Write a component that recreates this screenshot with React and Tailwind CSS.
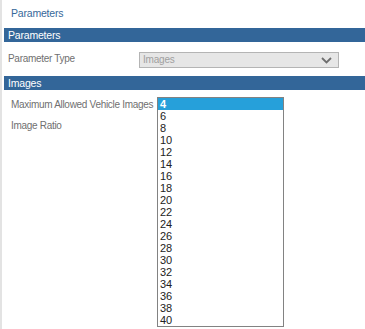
import React from "react";

const options = [4, 6, 8, 10, 12, 14, 16, 18, 20, 22, 24, 26, 28, 30, 32, 34, 36, 38, 40];

const SectionBar = ({ title }) => (
  <div className="h-[14px] bg-[#336699] pl-[4px] text-[10.5px] leading-[14px] tracking-[-0.2px] text-white">{title}</div>
);

export default function App() {
  return (
    <div
      className="relative flex h-[329px] w-[365px] overflow-hidden bg-white"
      style={{ fontFamily: '"Liberation Sans", Arial, sans-serif' }}
    >
      {/* left gutter */}
      <div className="w-[2px] bg-[#e3e3e3]" />
      <div className="ml-[2px] flex-1">
        <div className="h-[28px] pl-[7px] pt-[6px] text-[10.5px] leading-[14px] tracking-[-0.2px] text-[#36689a]">Parameters</div>

        <SectionBar title="Parameters" />
        <div className="flex h-[34px] items-start">
          <div className="w-[135px] pl-[4px] pt-[10px] text-[10px] leading-[14px] tracking-[-0.3px] text-[#707070]">Parameter Type</div>
          <div className="mt-[10px] flex h-[16px] w-[200px] items-center justify-between border border-[#b4b4b4] bg-[#e6e6e6] pl-[3px] pr-[6px]">
            <span className="text-[10px] leading-[14px] tracking-[-0.2px] text-[#a0a0a0]">Images</span>
            <svg width="11" height="7" viewBox="0 0 11 7" fill="none">
              <path d="M1 1l4.5 4.5L10 1" stroke="#6e6e6e" strokeWidth="1.8" />
            </svg>
          </div>
        </div>

        <SectionBar title="Images" />
        <div className="pl-[7px] pt-[8px] text-[10px] leading-[14px] tracking-[-0.3px] text-[#707070]">
          <div className="h-[21px]">Maximum Allowed Vehicle Images</div>
          <div>Image Ratio</div>
        </div>
      </div>

      {/* open dropdown list */}
      <div className="absolute left-[157px] top-[97px] w-[127px] border border-[#828282] bg-white">
        {options.map((o, i) => (
          <div
            key={o}
            className={
              i === 0
                ? "h-[12px] bg-[#26a0da] pl-[2px] text-[11px] font-bold leading-[12px] text-white"
                : "h-[12px] pl-[2px] text-[11px] leading-[12px] text-[#222]"
            }
          >
            {o}
          </div>
        ))}
      </div>
    </div>
  );
}
